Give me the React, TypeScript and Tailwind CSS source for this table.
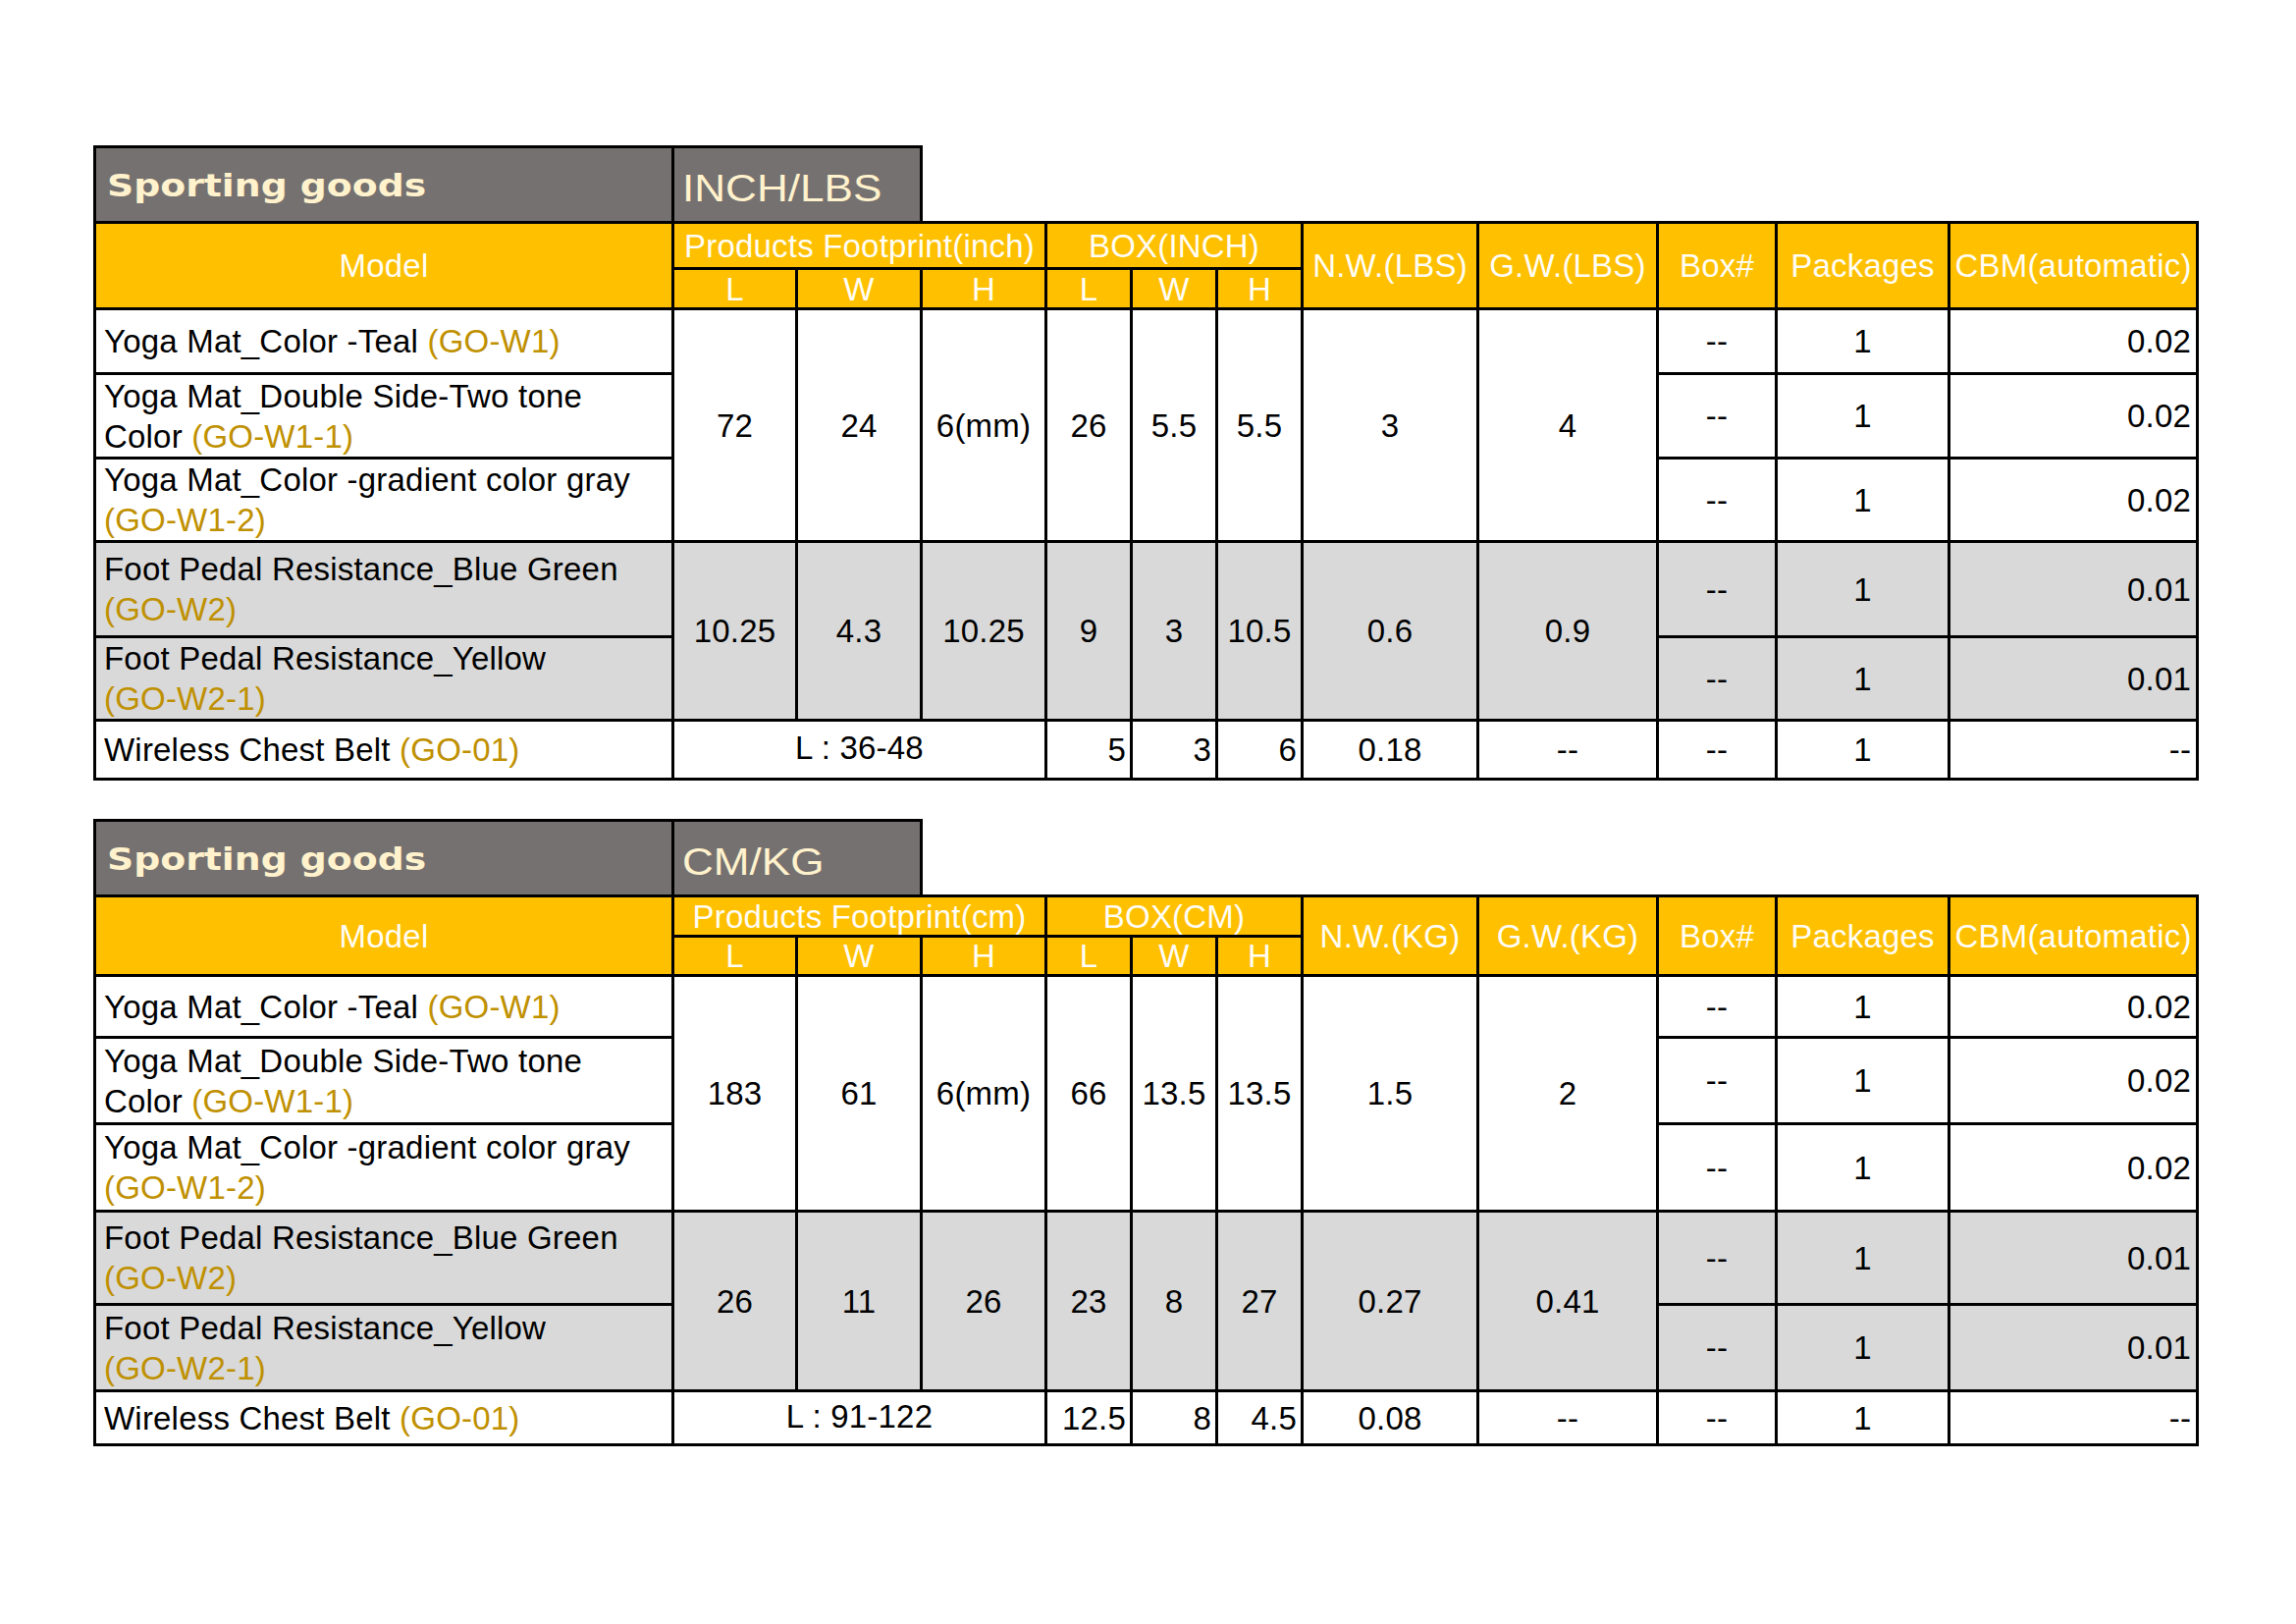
import React from "react"

type Group = {
  fp: (string | number)[]
  box: (string | number)[]
  nw: string | number
  gw: string | number
}

type Sheet = {
  unit: string
  fpLabel: string
  boxLabel: string
  nwLabel: string
  gwLabel: string
  yoga: Group
  pedal: Group
  beltSize: string
  beltBox: (string | number)[]
  beltNw: string | number
  headH: [number, number]
  rowH: number[]
}

const sheets: Sheet[] = [
  {
    unit: "INCH/LBS",
    fpLabel: "Products Footprint(inch)",
    boxLabel: "BOX(INCH)",
    nwLabel: "N.W.(LBS)",
    gwLabel: "G.W.(LBS)",
    yoga: { fp: [72, 24, "6(mm)"], box: [26, 5.5, 5.5], nw: 3, gw: 4 },
    pedal: { fp: [10.25, 4.3, 10.25], box: [9, 3, 10.5], nw: 0.6, gw: 0.9 },
    beltSize: "L : 36-48",
    beltBox: [5, 3, 6],
    beltNw: 0.18,
    headH: [47, 41],
    rowH: [66, 86, 85, 97, 85, 60],
  },
  {
    unit: "CM/KG",
    fpLabel: "Products Footprint(cm)",
    boxLabel: "BOX(CM)",
    nwLabel: "N.W.(KG)",
    gwLabel: "G.W.(KG)",
    yoga: { fp: [183, 61, "6(mm)"], box: [66, 13.5, 13.5], nw: 1.5, gw: 2 },
    pedal: { fp: [26, 11, 26], box: [23, 8, 27], nw: 0.27, gw: 0.41 },
    beltSize: "L : 91-122",
    beltBox: [12.5, 8, 4.5],
    beltNw: 0.08,
    headH: [41, 40],
    rowH: [63, 88, 89, 95, 88, 55],
  },
]

const colW = [589, 126, 127, 127, 87, 87, 87, 179, 183, 121, 176, 253]

const cell = "border-[3px] border-black p-0 text-center align-middle leading-[41px]"
const head = `${cell} bg-[#ffc000] text-[#fffdf5] !leading-none`
const Code = ({ children }: { children: React.ReactNode }) => (
  <span className="text-[#bf9000]">{children}</span>
)

const Model = ({ children }: { children: React.ReactNode }) => (
  <td className={`${cell} text-left pl-[8px] whitespace-nowrap`}>{children}</td>
)

const SheetTable = ({ s }: { s: Sheet }) => {
  const grey = "bg-[#d9d9d9]"
  const merged = (g: Group, span: number, bg: string) => (
    <>
      {[...g.fp, ...g.box].map((v, i) => (
        <td key={i} rowSpan={span} className={`${cell} ${bg}`}>{v}</td>
      ))}
      <td rowSpan={span} className={`${cell} ${bg}`}>{g.nw}</td>
      <td rowSpan={span} className={`${cell} ${bg}`}>{g.gw}</td>
    </>
  )
  const tail = (cbm: string, bg: string) => (
    <>
      <td className={`${cell} ${bg}`}>--</td>
      <td className={`${cell} ${bg}`}>1</td>
      <td className={`${cell} ${bg} text-right pr-[5px]`}>{cbm}</td>
    </>
  )

  return (
    <table className="table-fixed border-collapse w-[2142px] text-[33px] tracking-[0.2px] text-black">
      <colgroup>
        {colW.map((w, i) => (
          <col key={i} style={{ width: w }} />
        ))}
      </colgroup>
      <tbody>
        {/* title bar */}
        <tr className="h-[77px]">
          <td className={`${cell} bg-[#767171] text-left pl-[11px] !leading-none`}>
            <span className="inline-block origin-left scale-x-[1.18] font-['DejaVu_Sans',sans-serif] font-bold text-[32px] leading-none text-[#fff2cc] tracking-normal">
              Sporting goods
            </span>
          </td>
          <td colSpan={2} className={`${cell} bg-[#767171] text-left !align-bottom pl-[8px] pb-[14px] !leading-none`}>
            <span className="inline-block origin-left scale-x-[1.16] text-[38px] leading-none text-[#fff2cc] tracking-normal">
              {s.unit}
            </span>
          </td>
          <td colSpan={9} className="p-0" />
        </tr>

        {/* header */}
        <tr style={{ height: s.headH[0] }}>
          <td rowSpan={2} className={head}>Model</td>
          <td colSpan={3} className={head}>{s.fpLabel}</td>
          <td colSpan={3} className={head}>{s.boxLabel}</td>
          <td rowSpan={2} className={head}>{s.nwLabel}</td>
          <td rowSpan={2} className={head}>{s.gwLabel}</td>
          <td rowSpan={2} className={head}>Box#</td>
          <td rowSpan={2} className={head}>Packages</td>
          <td rowSpan={2} className={head}>CBM(automatic)</td>
        </tr>
        <tr style={{ height: s.headH[1] }}>
          {["L", "W", "H", "L", "W", "H"].map((t, i) => (
            <td key={i} className={head}>{t}</td>
          ))}
        </tr>

        {/* yoga mats */}
        <tr style={{ height: s.rowH[0] }}>
          <Model>Yoga Mat_Color -Teal <Code>(GO-W1)</Code></Model>
          {merged(s.yoga, 3, "")}
          {tail("0.02", "")}
        </tr>
        <tr style={{ height: s.rowH[1] }}>
          <Model>
            Yoga Mat_Double Side-Two tone
            <br />
            Color <Code>(GO-W1-1)</Code>
          </Model>
          {tail("0.02", "")}
        </tr>
        <tr style={{ height: s.rowH[2] }}>
          <Model>
            Yoga Mat_Color -gradient color gray
            <br />
            <Code>(GO-W1-2)</Code>
          </Model>
          {tail("0.02", "")}
        </tr>

        {/* foot pedals */}
        <tr style={{ height: s.rowH[3] }} className={grey}>
          <Model>
            Foot Pedal Resistance_Blue Green
            <br />
            <Code>(GO-W2)</Code>
          </Model>
          {merged(s.pedal, 2, grey)}
          {tail("0.01", grey)}
        </tr>
        <tr style={{ height: s.rowH[4] }} className={grey}>
          <Model>
            Foot Pedal Resistance_Yellow
            <br />
            <Code>(GO-W2-1)</Code>
          </Model>
          {tail("0.01", grey)}
        </tr>

        {/* chest belt */}
        <tr style={{ height: s.rowH[5] }}>
          <Model>Wireless Chest Belt <Code>(GO-01)</Code></Model>
          <td colSpan={3} className={`${cell} !leading-none pb-[4px]`}>{s.beltSize}</td>
          {s.beltBox.map((v, i) => (
            <td key={i} className={`${cell} text-right pr-[4px]`}>{v}</td>
          ))}
          <td className={cell}>{s.beltNw}</td>
          <td className={cell}>--</td>
          <td className={cell}>--</td>
          <td className={cell}>1</td>
          <td className={`${cell} text-right pr-[5px]`}>--</td>
        </tr>
      </tbody>
    </table>
  )
}

export default function App() {
  return (
    <div className="w-[2339px] h-[1654px] bg-white font-['Liberation_Sans',Arial,sans-serif]">
      <div className="flex flex-col gap-[39px] pt-[148px] pl-[95px]">
        {sheets.map((s) => (
          <SheetTable key={s.unit} s={s} />
        ))}
      </div>
    </div>
  )
}
